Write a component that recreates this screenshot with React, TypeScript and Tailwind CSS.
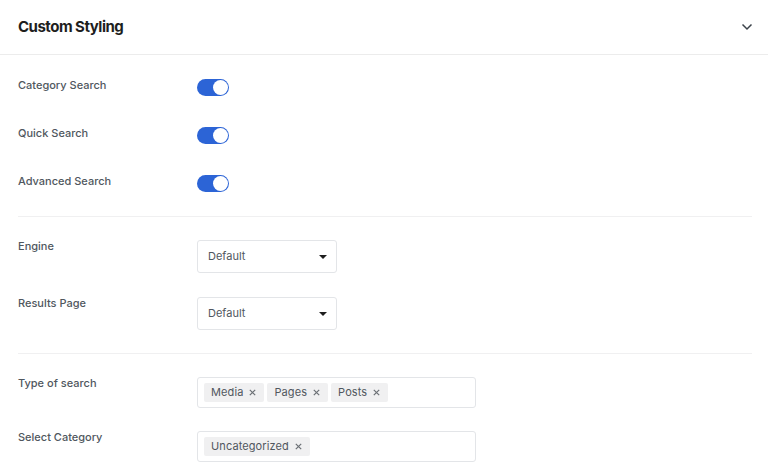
import React from "react";

function Toggle() {
  return (
    <div className="w-[32px] h-[17px] rounded-full bg-[#2c64d6] flex items-center justify-end pr-[1px]">
      <div className="w-[15px] h-[15px] rounded-full bg-white" />
    </div>
  );
}

function Select() {
  return (
    <div className="w-[140px] h-[33px] border border-[#e3e5e8] rounded-[3px] flex items-center justify-between pl-[10px] pr-[9px] text-[11px] text-[#50575e]">
      <span>Default</span>
      <svg width="8" height="4" viewBox="0 0 8 4"><path d="M0 0 L8 0 L4 4 Z" fill="#1e1e1e" /></svg>
    </div>
  );
}

function Tag({ label }: { label: string }) {
  return (
    <div className="h-[19px] bg-[#f0f0f1] rounded-[2px] flex items-center pl-[7px] pr-[8px] gap-[6px] text-[11px] text-[#50575e] tracking-[0.1px]">
      <span>{label}</span>
      <svg width="7" height="7" viewBox="0 0 7 7"><path d="M0.8 0.8 L6.2 6.2 M6.2 0.8 L0.8 6.2" stroke="#6b7075" strokeWidth="1.2" /></svg>
    </div>
  );
}

function TagInput({ tags }: { tags: string[] }) {
  return (
    <div className="w-[279px] h-[31px] border border-[#e3e5e8] rounded-[3px] flex items-center px-[6px] gap-[3px]">
      {tags.map((t) => (
        <Tag key={t} label={t} />
      ))}
    </div>
  );
}

function Label({ children }: { children: React.ReactNode }) {
  return (
    <div className="w-[179px] shrink-0 text-[11px] leading-4 font-medium text-[#50575e] -mt-[2px]">{children}</div>
  );
}

export default function App() {
  return (
    <div className="w-[768px] h-[467px] bg-white overflow-hidden" style={{ fontFamily: "Inter, 'Noto Sans', sans-serif" }}>
      <div className="h-[55px] border-b border-[#ececec] flex items-center justify-between pl-[18px] pr-[15px]">
        <div className="text-[15px] font-bold text-[#1e1e1e] tracking-[-0.5px]">Custom Styling</div>
        <svg width="12" height="8" viewBox="0 0 12 8"><path d="M1.5 1.5 L6 6 L10.5 1.5" fill="none" stroke="#3c434a" strokeWidth="1.5" /></svg>
      </div>
      <div className="pl-[18px] pr-[16px]">
        <div className="py-[24px] flex flex-col gap-[31px] border-b border-[#f0f0f1]">
          <div className="flex items-start"><Label>Category Search</Label><Toggle /></div>
          <div className="flex items-start"><Label>Quick Search</Label><Toggle /></div>
          <div className="flex items-start"><Label>Advanced Search</Label><Toggle /></div>
        </div>
        <div className="pt-[23px] pb-[23px] flex flex-col gap-[24px] border-b border-[#f0f0f1]">
          <div className="flex items-start"><Label>Engine</Label><Select /></div>
          <div className="flex items-start"><Label>Results Page</Label><Select /></div>
        </div>
        <div className="pt-[23px] flex flex-col gap-[23px]">
          <div className="flex items-start"><Label>Type of search</Label><TagInput tags={["Media", "Pages", "Posts"]} /></div>
          <div className="flex items-start"><Label>Select Category</Label><TagInput tags={["Uncategorized"]} /></div>
        </div>
      </div>
    </div>
  );
}
